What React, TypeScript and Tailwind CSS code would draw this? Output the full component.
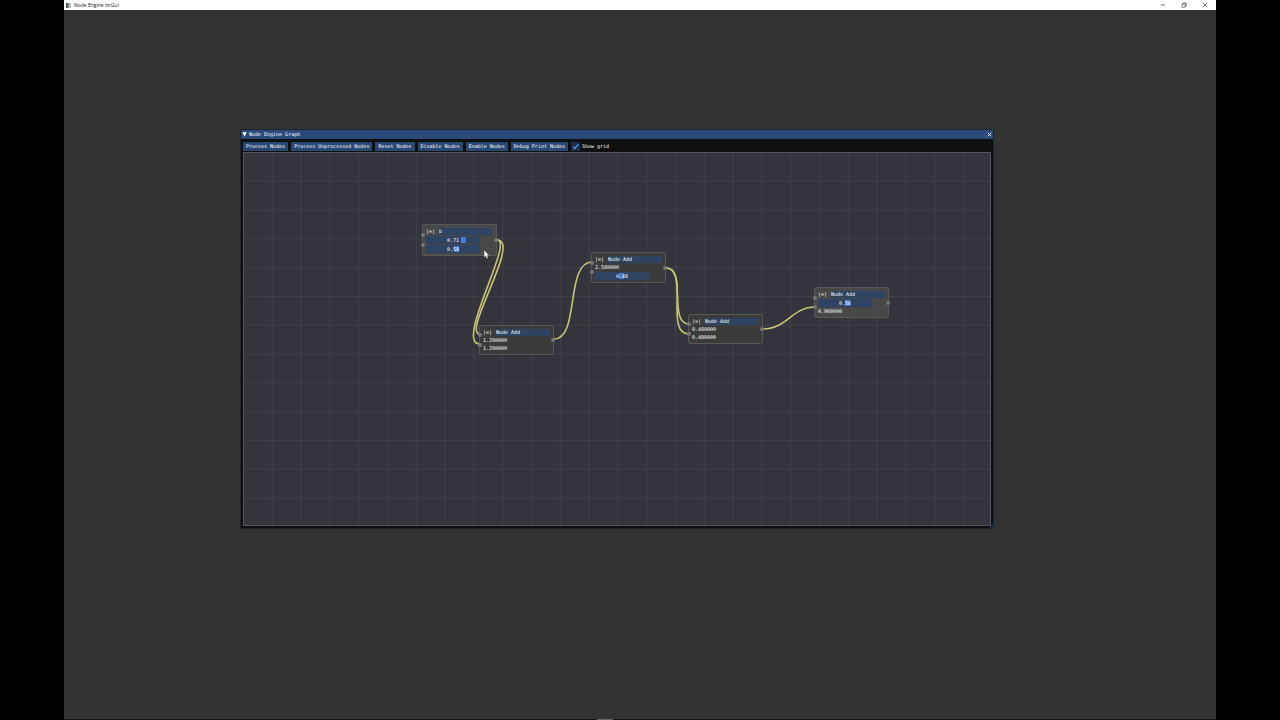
import { useState } from 'react';
import type { ReactNode } from 'react';

type Row = { kind: 'text'; value: string } | { kind: 'slider'; value: number; label: string };

interface GraphNode {
  id: string;
  title: string;
  // position on the canvas
  x: number;
  y: number;
  active?: boolean;
  rows: Row[];
}

const NODES: GraphNode[] = [
  {
    id: 'b',
    title: 'b',
    x: 178,
    y: 71,
    active: true,
    rows: [
      { kind: 'slider', value: 0.71, label: 'b first input' },
      { kind: 'slider', value: 0.58, label: 'b second input' },
    ],
  },
  {
    id: 'add-1',
    title: 'Node Add',
    x: 235,
    y: 172,
    rows: [
      { kind: 'text', value: '1.290000' },
      { kind: 'text', value: '1.290000' },
    ],
  },
  {
    id: 'add-2',
    title: 'Node Add',
    x: 347,
    y: 99,
    rows: [
      { kind: 'text', value: '2.580000' },
      { kind: 'slider', value: 0.48, label: 'Node Add second input' },
    ],
  },
  {
    id: 'add-3',
    title: 'Node Add',
    x: 444,
    y: 161,
    rows: [
      { kind: 'text', value: '0.480000' },
      { kind: 'text', value: '0.480000' },
    ],
  },
  {
    id: 'add-4',
    title: 'Node Add',
    x: 570,
    y: 134,
    active: true,
    rows: [
      { kind: 'slider', value: 0.56, label: 'Node Add first input' },
      { kind: 'text', value: '0.960000' },
    ],
  },
];

// Bezier links between ports, in canvas coordinates
const LINKS = [
  'M253 87 C278 87 217 181 236 181',
  'M253 87 C271 87 210 191 236 191',
  'M310 186 C336 186 321 109 348 109',
  'M422 115 C443 115 424 171 445 171',
  'M422 115 C446 115 420 181 445 181',
  'M519 176 C543 176 548 154 571 154',
];

const ACTIONS = [
  'Process Nodes',
  'Process Unprocessed Nodes',
  'Reset Nodes',
  'Disable Nodes',
  'Enable Nodes',
  'Debug Print Nodes',
];

function ToolButton({ children }: { children: ReactNode }) {
  return (
    <button className="h-[9px] whitespace-nowrap bg-[#274872] px-[3px] leading-[9px] hover:bg-[#4296fa]">
      {children}
    </button>
  );
}

function Port({ className }: { className: string }) {
  return <span className={`absolute size-1 -translate-y-1/2 rounded-full bg-[#777777] ${className}`} />;
}

function Slider({ initial, label }: { initial: number; label: string }) {
  const [value, setValue] = useState(initial);

  return (
    <div className="relative h-2 w-[54px]">
      <input
        type="range"
        min={0}
        max={1}
        step={0.01}
        value={value}
        aria-label={label}
        onChange={(e) => setValue(Number(e.target.value))}
        className="block h-2 w-full appearance-none bg-[#2f4463] [&::-webkit-slider-thumb]:h-1.5 [&::-webkit-slider-thumb]:w-[5px] [&::-webkit-slider-thumb]:appearance-none [&::-webkit-slider-thumb]:bg-[#427fd8]"
      />
      <span className="pointer-events-none absolute inset-0 text-center leading-2">{value.toFixed(2)}</span>
    </div>
  );
}

function NodeBox({ node }: { node: GraphNode }) {
  return (
    <article
      className={`absolute flex w-[75px] flex-col rounded-[2px] border border-[#585858] px-[3px] pt-[3px] pb-[2px] ${
        node.active ? 'bg-[#484848]' : 'bg-[#3b3b3b]'
      }`}
      style={{ left: node.x, top: node.y }}
    >
      <header className="flex h-[7px] leading-[7px]">
        <span className="w-[13px]">|=|</span>
        <h2 className="flex-1 bg-[#2f4463]">{node.title}</h2>
      </header>
      <div className="mt-px flex flex-col gap-px">
        {node.rows.map((row, i) =>
          row.kind === 'slider' ? (
            <Slider key={i} initial={row.value} label={row.label} />
          ) : (
            <p key={i} className="h-[7px] leading-[7px]">
              {row.value}
            </p>
          ),
        )}
      </div>
      <Port className="top-1/3 -left-[2px]" />
      <Port className="top-2/3 -left-[2px]" />
      <Port className="top-1/2 -right-[2px]" />
    </article>
  );
}

function Canvas({ showGrid }: { showGrid: boolean }) {
  return (
    <div className="relative flex-1 overflow-hidden border border-[#55555c] bg-[#34343d]">
      <svg className="absolute inset-0 size-full" aria-hidden="true">
        <defs>
          <pattern id="grid" width="28.8" height="28.8" patternUnits="userSpaceOnUse">
            <path d="M28.4 0V28.8M0 28.4H28.8" stroke="#45454e" strokeWidth="0.8" />
          </pattern>
        </defs>
        {showGrid && <rect width="100%" height="100%" fill="url(#grid)" />}
        {LINKS.map((d) => (
          <path key={d} d={d} fill="none" stroke="#c8c474" strokeWidth="1.6" />
        ))}
      </svg>
      {NODES.map((node) => (
        <NodeBox key={node.id} node={node} />
      ))}
      {/* mouse pointer */}
      <svg className="absolute top-[97px] left-[240px] h-[10px] w-[6px]" viewBox="0 0 6 10" aria-hidden="true">
        <path d="M.2.2V7.2L1.7 5.9L2.8 8.6L4.1 8L3 5.5H5Z" fill="#fff" stroke="#333" strokeWidth=".2" />
      </svg>
    </div>
  );
}

function GraphWindow() {
  const [showGrid, setShowGrid] = useState(true);

  return (
    <section className="absolute top-[119px] left-[176px] flex h-[400px] w-[754px] flex-col border border-[#1b2433] bg-[#0f0f0f] font-['DejaVu_Sans_Mono',monospace] text-[5px] text-white">
      <header className="flex h-[9px] items-center gap-[2px] bg-[#294a7a] px-px leading-[9px]">
        <button aria-label="Collapse">
          <svg className="h-[5px] w-[5px]" viewBox="0 0 5 5">
            <path d="M.3 .3H4.7L2.5 4.8Z" fill="#fff" />
          </svg>
        </button>
        <h1 className="flex-1">Node Engine Graph</h1>
        <button aria-label="Close">
          <svg className="h-[5px] w-[5px]" viewBox="0 0 5 5">
            <path d="M.7.7L4.3 4.3M4.3.7L.7 4.3" stroke="#fff" strokeWidth=".8" />
          </svg>
        </button>
      </header>
      <div className="flex flex-1 flex-col gap-px px-[2px] pt-[3px] pb-[2px]">
        <div className="flex items-center gap-[3px]">
          {ACTIONS.map((name) => (
            <ToolButton key={name}>{name}</ToolButton>
          ))}
          <label className="flex items-center gap-[2px] leading-[9px]">
            <span className="relative size-[9px]">
              <input
                type="checkbox"
                checked={showGrid}
                onChange={(e) => setShowGrid(e.target.checked)}
                className="block size-[9px] appearance-none bg-[#1d2f4a]"
              />
              {showGrid && (
                <svg className="pointer-events-none absolute inset-0 size-[9px]" viewBox="0 0 9 9">
                  <path d="M2 4.6L3.8 6.5L7.4 2.2" fill="none" stroke="#4296fa" strokeWidth="1.2" />
                </svg>
              )}
            </span>
            Show grid
          </label>
        </div>
        <Canvas showGrid={showGrid} />
      </div>
      {/* resize grip */}
      <svg className="absolute right-0 bottom-0 size-1" viewBox="0 0 4 4" aria-hidden="true">
        <path d="M4 0V4H0Z" fill="#1c2f4d" />
      </svg>
    </section>
  );
}

export default function App() {
  return (
    <div className="flex min-h-screen flex-col bg-black px-[5%]">
      <header className="flex h-[10px] items-center bg-white pr-2 pl-[2px] font-['Open_Sans',sans-serif] text-[5px] leading-[10px] text-[#222]">
        <svg className="mr-[3px] h-[5px] w-[5px]" viewBox="0 0 6 6" aria-hidden="true">
          <rect width="6" height="6" fill="#b9c0c0" />
          <rect width="3" height="6" fill="#55605f" />
        </svg>
        <span className="flex-1">Node Engine ImGui</span>
        <div className="flex items-center gap-[15px]">
          <button aria-label="Minimize">
            <svg className="h-[6px] w-[6px]" viewBox="0 0 6 6">
              <path d="M.8 3H5.2" stroke="#333" strokeWidth=".7" />
            </svg>
          </button>
          <button aria-label="Restore">
            <svg className="h-[6px] w-[6px]" viewBox="0 0 6 6" fill="none" stroke="#333" strokeWidth=".6">
              <path d="M1 2H4.2V5.2H1ZM2 2V1H5.2V4.2H4.2" />
            </svg>
          </button>
          <button aria-label="Close window">
            <svg className="h-[6px] w-[6px]" viewBox="0 0 6 6">
              <path d="M.8.8L5.2 5.2M5.2.8L.8 5.2" stroke="#333" strokeWidth=".7" />
            </svg>
          </button>
        </div>
      </header>
      <main className="relative flex-1 bg-[#333333]">
        <GraphWindow />
      </main>
      {/* edge of the hidden taskbar */}
      <footer className="flex h-px bg-[#111111] pl-[533px]">
        <span className="w-4 bg-[#666666]" />
      </footer>
    </div>
  );
}
